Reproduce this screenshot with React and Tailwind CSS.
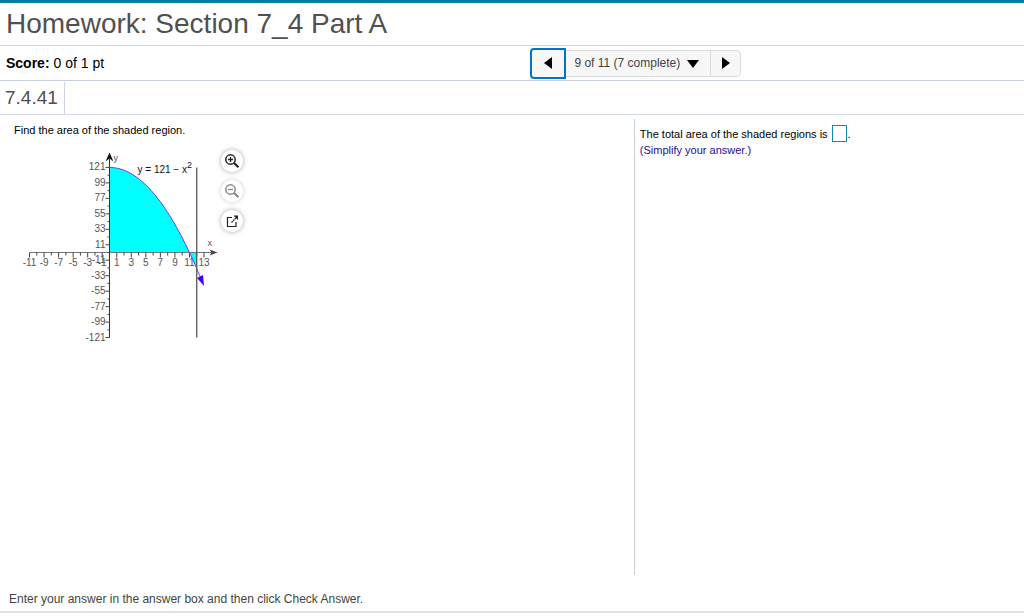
import React, { useState } from 'react';

// pixels per graph unit, origin sits at 0,0 of the svg
const UNIT_X = 7.27;
const UNIT_Y = 0.703;

const px = (x) => x * UNIT_X;
const py = (y) => -y * UNIT_Y;

const range = (from, to, step) => {
  const out = [];
  for (let v = from; v <= to; v += step) out.push(v);
  return out;
};

const curve = (from, to) =>
  range(0, 40, 1)
    .map((i) => {
      const x = from + ((to - from) * i) / 40;
      return `${px(x).toFixed(2)},${py(121 - x * x).toFixed(2)}`;
    })
    .join(' ');

const Graph = () => (
  <svg
    width="201"
    height="196"
    viewBox="-89.5 -102.5 201 196"
    role="img"
    aria-label="Graph of y = 121 - x squared"
    className="shrink-0 font-['Liberation_Sans',sans-serif]"
  >
    {/* shaded regions */}
    <polygon points={`0,0 ${curve(0, 11)}`} fill="#00ffff" />
    <polygon points={`${px(11)},0 ${curve(11, 12)} ${px(12)},0`} fill="#00ffff" />

    {/* x axis */}
    <line x1={px(-11)} y1="0" x2="104" y2="0" stroke="#777" />
    <path d="M108 0l-8-3 2 3-2 3z" fill="#444" />
    {range(-11, 13, 1).map((v) => (
      <line key={v} x1={px(v)} y1="0" x2={px(v)} y2={v % 2 ? 5 : 3} stroke="#444" />
    ))}
    {range(-11, 13, 2).map((v) => (
      <text key={v} x={px(v)} y="13" textAnchor="middle" fontSize="10" fill="#555">{v}</text>
    ))}
    <text x="98" y="-7" fontSize="9" fill="#555">x</text>

    {/* y axis */}
    <line x1="0" y1="-94" x2="0" y2={py(-121)} stroke="#333" />
    <path d="M0 -100l-4 9 4-3 4 3z" fill="#111" />
    {range(-121, 121, 11).map((v) => (
      <line key={v} x1={v % 2 ? -4 : -2} y1={py(v)} x2="0" y2={py(v)} stroke="#444" />
    ))}
    {range(-121, 121, 22).map((v) => (
      <text key={v} x="-4" y={py(v) + 3} textAnchor="end" fontSize="10" fill="#555">{v}</text>
    ))}
    <text x="4" y="-92" fontSize="9" fill="#555">y</text>

    {/* curve and vertical line */}
    <polyline points={curve(0, 12.7)} fill="none" stroke="#6a3cff" />
    <path d="M94.500 33.500l-7-8 6-3z" fill="#4400ff" />
    <line x1={px(12)} y1={py(121)} x2={px(12)} y2={py(-121)} stroke="#555" strokeWidth="1.300" />
    <text x="28" y="-80" fontSize="10" fill="#111">
      y = 121 − x<tspan dy="-5" fontSize="9">2</tspan>
    </text>
  </svg>
);

const Magnifier = ({ sign }) => (
  <svg width="16" height="16" viewBox="0 0 16 16" fill="none" stroke="currentColor">
    <circle cx="6.500" cy="6.500" r="4.700" strokeWidth="1.500" />
    <path d="M10 10l4.500 4.200" strokeWidth="2.200" />
    <path d={sign === '+' ? 'M4 6.500h5M6.500 4v5' : 'M4 6.500h5'} strokeWidth="1.300" />
  </svg>
);

const PopOut = () => (
  <svg width="16" height="16" viewBox="0 0 16 16" fill="none" stroke="currentColor">
    <path d="M8 4.500H3.500v9h8.500V9" strokeWidth="1.200" />
    <path d="M7.500 9.500l4.500-4.500" strokeWidth="1.200" strokeDasharray="1.800 0.600" />
    <path d="M9.500 2.500h4.500v4.500z" fill="currentColor" stroke="none" />
  </svg>
);

const ToolButton = ({ label, disabled, children }) => (
  <button
    type="button"
    aria-label={label}
    disabled={disabled}
    className="flex h-[22px] w-[22px] items-center justify-center rounded-full bg-white text-[#222] shadow-[0_0_5px_rgba(0,0,0,0.35)] disabled:text-[#888] disabled:shadow-[0_0_5px_rgba(0,0,0,0.2)]"
  >
    {children}
  </button>
);

const QuestionNav = () => (
  <div className="flex items-center">
    <button
      type="button"
      aria-label="Previous question"
      className="flex h-[31px] w-[36px] items-center justify-center rounded-l border-2 border-[#0074c8] bg-[#f7f7f7]"
    >
      <svg width="8" height="12" viewBox="0 0 8 12"><path d="M8 0v12L0 6z" /></svg>
    </button>
    <div className="relative">
      <select
        aria-label="Question"
        className="h-[27px] w-[144px] appearance-none border-y border-[#dcdcdc] bg-[#f7f7f7] pl-2 text-xs text-[#444]"
      >
        <option>9 of 11 (7 complete)</option>
      </select>
      <svg width="12" height="8" viewBox="0 0 12 8" className="pointer-events-none absolute top-[10px] right-[11px]">
        <path d="M0 0h12L6 8z" />
      </svg>
    </div>
    <button
      type="button"
      aria-label="Next question"
      className="flex h-[27px] w-[31px] items-center justify-center rounded-r border border-[#dcdcdc] bg-[#f7f7f7]"
    >
      <svg width="8" height="12" viewBox="0 0 8 12"><path d="M0 0v12l8-6z" /></svg>
    </button>
  </div>
);

const App = () => {
  const [answer, setAnswer] = useState('');

  return (
    <div className="flex min-h-screen flex-col border-t-3 border-[#007fa3] bg-white font-['Liberation_Sans',Arial,sans-serif] text-black">
      <header>
        <h1 className="border-b border-[#d0d5e2] pl-[6px] text-[28px] leading-[42px] text-[#505050]">
          Homework: Section 7_4 Part A
        </h1>
        <div className="flex h-[35px] items-center border-b border-[#c8cfdf]">
          <p className="w-[51.8%] pl-[6px] text-sm">
            <b>Score:</b> 0 of 1 pt
          </p>
          <QuestionNav />
        </div>
        <div className="border-b border-[#d5dbe6] pt-px">
          <h2 className="w-[65px] border-r border-[#d0d5e2] pl-[5px] text-[19px] leading-8 text-[#505050]">
            7.4.41
          </h2>
        </div>
      </header>

      <main className="flex grow pt-1 text-[11px]">
        <section className="w-[61.9%] pt-[3px] pl-[14px]">
          <p className="leading-4">Find the area of the shaded region.</p>
          <div className="mt-3 flex pl-[6px]">
            <Graph />
            <div className="flex flex-col gap-2">
              <ToolButton label="Zoom in"><Magnifier sign="+" /></ToolButton>
              <ToolButton label="Zoom out" disabled><Magnifier sign="-" /></ToolButton>
              <ToolButton label="Open in new window"><PopOut /></ToolButton>
            </div>
          </div>
        </section>

        <section className="grow border-l border-[#c9d0df] pt-[6px] pl-[5px]">
          <div className="flex items-center gap-1 leading-4">
            <label htmlFor="answer">The total area of the shaded regions is</label>
            <span className="flex items-center gap-px">
              <input
                id="answer"
                type="text"
                value={answer}
                onChange={(e) => setAnswer(e.target.value)}
                className="h-[17px] w-[15px] border border-[#1b87a8] text-center outline-none"
              />
              .
            </span>
          </div>
          <p className="leading-4 text-[#2a0a94]">(Simplify your answer.)</p>
        </section>
      </main>

      <footer className="mb-[3px] border-b-2 border-[#e4e3ea] pt-[14px] pb-[2px] pl-[9px] text-xs leading-5 text-[#444]">
        Enter your answer in the answer box and then click Check Answer.
      </footer>
    </div>
  );
};

export default App;
